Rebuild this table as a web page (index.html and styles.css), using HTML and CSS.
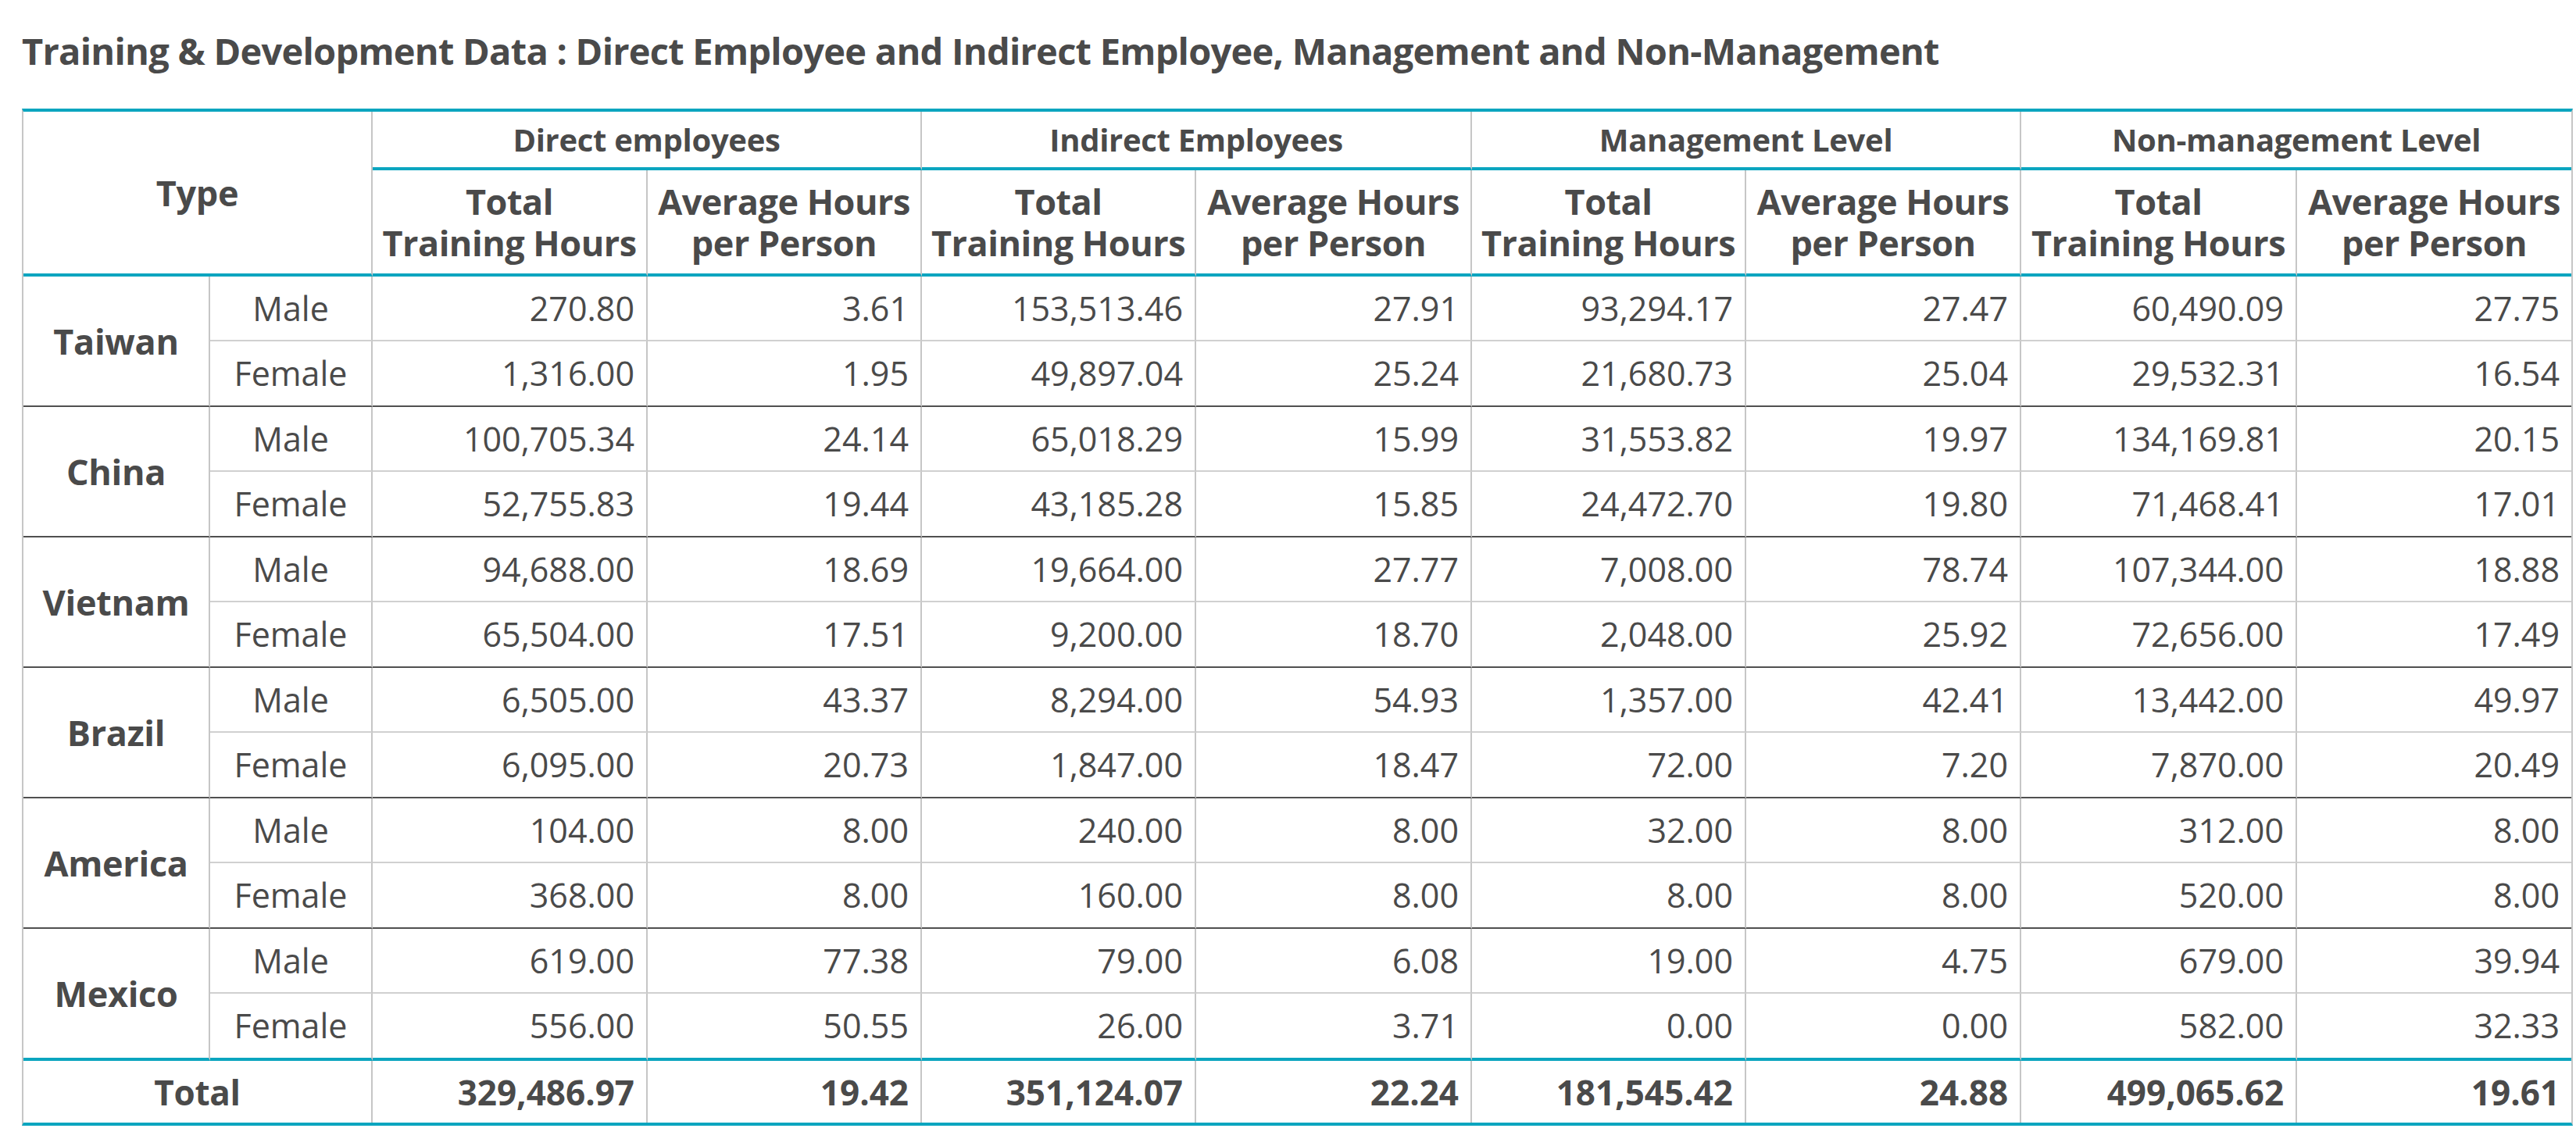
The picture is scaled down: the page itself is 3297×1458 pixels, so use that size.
FILE: index.html
```html
<!DOCTYPE html>
<html lang="en">
<head>
<meta charset="utf-8">
<title>Training &amp; Development Data</title>
<link rel="stylesheet" href="styles.css">
</head>
<body>
<div class="page">
  <h1 class="title">Training &amp; Development Data : Direct Employee and Indirect Employee, Management and Non-Management</h1>
  <table class="data-table">
    <colgroup>
      <col class="c-country">
      <col class="c-gender">
      <col class="c-w352">
      <col class="c-w351">
      <col class="c-w351">
      <col class="c-w353">
      <col class="c-w351">
      <col class="c-w352">
      <col class="c-w353">
      <col class="c-w351">
    </colgroup>
    <thead>
      <tr class="row-group">
        <th class="type" rowspan="2" colspan="2">Type</th>
        <th class="group" colspan="2">Direct employees</th>
        <th class="group" colspan="2">Indirect Employees</th>
        <th class="group" colspan="2">Management Level</th>
        <th class="group last" colspan="2">Non-management Level</th>
      </tr>
      <tr class="row-sub">
        <th class="sub"><span class="ln">Total</span><span class="ln">Training Hours</span></th>
        <th class="sub"><span class="ln">Average Hours</span><span class="ln">per Person</span></th>
        <th class="sub"><span class="ln">Total</span><span class="ln">Training Hours</span></th>
        <th class="sub"><span class="ln">Average Hours</span><span class="ln">per Person</span></th>
        <th class="sub"><span class="ln">Total</span><span class="ln">Training Hours</span></th>
        <th class="sub"><span class="ln">Average Hours</span><span class="ln">per Person</span></th>
        <th class="sub"><span class="ln">Total</span><span class="ln">Training Hours</span></th>
        <th class="sub last"><span class="ln">Average Hours</span><span class="ln">per Person</span></th>
      </tr>
    </thead>
    <tbody>
      <tr class="male">
        <th class="country" rowspan="2">Taiwan</th>
        <td class="gender">Male</td>
        <td class="num">270.80</td><td class="num">3.61</td>
        <td class="num">153,513.46</td><td class="num">27.91</td>
        <td class="num">93,294.17</td><td class="num">27.47</td>
        <td class="num">60,490.09</td><td class="num last">27.75</td>
      </tr>
      <tr class="female">
        <td class="gender">Female</td>
        <td class="num">1,316.00</td><td class="num">1.95</td>
        <td class="num">49,897.04</td><td class="num">25.24</td>
        <td class="num">21,680.73</td><td class="num">25.04</td>
        <td class="num">29,532.31</td><td class="num last">16.54</td>
      </tr>
      <tr class="male">
        <th class="country" rowspan="2">China</th>
        <td class="gender">Male</td>
        <td class="num">100,705.34</td><td class="num">24.14</td>
        <td class="num">65,018.29</td><td class="num">15.99</td>
        <td class="num">31,553.82</td><td class="num">19.97</td>
        <td class="num">134,169.81</td><td class="num last">20.15</td>
      </tr>
      <tr class="female">
        <td class="gender">Female</td>
        <td class="num">52,755.83</td><td class="num">19.44</td>
        <td class="num">43,185.28</td><td class="num">15.85</td>
        <td class="num">24,472.70</td><td class="num">19.80</td>
        <td class="num">71,468.41</td><td class="num last">17.01</td>
      </tr>
      <tr class="male">
        <th class="country" rowspan="2">Vietnam</th>
        <td class="gender">Male</td>
        <td class="num">94,688.00</td><td class="num">18.69</td>
        <td class="num">19,664.00</td><td class="num">27.77</td>
        <td class="num">7,008.00</td><td class="num">78.74</td>
        <td class="num">107,344.00</td><td class="num last">18.88</td>
      </tr>
      <tr class="female">
        <td class="gender">Female</td>
        <td class="num">65,504.00</td><td class="num">17.51</td>
        <td class="num">9,200.00</td><td class="num">18.70</td>
        <td class="num">2,048.00</td><td class="num">25.92</td>
        <td class="num">72,656.00</td><td class="num last">17.49</td>
      </tr>
      <tr class="male">
        <th class="country" rowspan="2">Brazil</th>
        <td class="gender">Male</td>
        <td class="num">6,505.00</td><td class="num">43.37</td>
        <td class="num">8,294.00</td><td class="num">54.93</td>
        <td class="num">1,357.00</td><td class="num">42.41</td>
        <td class="num">13,442.00</td><td class="num last">49.97</td>
      </tr>
      <tr class="female">
        <td class="gender">Female</td>
        <td class="num">6,095.00</td><td class="num">20.73</td>
        <td class="num">1,847.00</td><td class="num">18.47</td>
        <td class="num">72.00</td><td class="num">7.20</td>
        <td class="num">7,870.00</td><td class="num last">20.49</td>
      </tr>
      <tr class="male">
        <th class="country" rowspan="2">America</th>
        <td class="gender">Male</td>
        <td class="num">104.00</td><td class="num">8.00</td>
        <td class="num">240.00</td><td class="num">8.00</td>
        <td class="num">32.00</td><td class="num">8.00</td>
        <td class="num">312.00</td><td class="num last">8.00</td>
      </tr>
      <tr class="female">
        <td class="gender">Female</td>
        <td class="num">368.00</td><td class="num">8.00</td>
        <td class="num">160.00</td><td class="num">8.00</td>
        <td class="num">8.00</td><td class="num">8.00</td>
        <td class="num">520.00</td><td class="num last">8.00</td>
      </tr>
      <tr class="male">
        <th class="country final" rowspan="2">Mexico</th>
        <td class="gender">Male</td>
        <td class="num">619.00</td><td class="num">77.38</td>
        <td class="num">79.00</td><td class="num">6.08</td>
        <td class="num">19.00</td><td class="num">4.75</td>
        <td class="num">679.00</td><td class="num last">39.94</td>
      </tr>
      <tr class="female final">
        <td class="gender">Female</td>
        <td class="num">556.00</td><td class="num">50.55</td>
        <td class="num">26.00</td><td class="num">3.71</td>
        <td class="num">0.00</td><td class="num">0.00</td>
        <td class="num">582.00</td><td class="num last">32.33</td>
      </tr>
    </tbody>
    <tfoot>
      <tr class="total">
        <th class="total-label" colspan="2">Total</th>
        <td class="num">329,486.97</td><td class="num">19.42</td>
        <td class="num">351,124.07</td><td class="num">22.24</td>
        <td class="num">181,545.42</td><td class="num">24.88</td>
        <td class="num">499,065.62</td><td class="num last">19.61</td>
      </tr>
    </tfoot>
  </table>
</div>
</body>
</html>
```

FILE: styles.css
```css
html, body {
  margin: 0;
  padding: 0;
  background: #ffffff;
}

body {
  font-family: "Open Sans", "Noto Sans", "DejaVu Sans", sans-serif;
  color: #4a4a4a;
}

.page {
  padding: 41px 0 0 28px;
}

.title {
  margin: 0 0 50px 0;
  font-size: 47px;
  line-height: 48px;
  font-weight: 700;
  letter-spacing: -0.75px;
  white-space: nowrap;
}

.data-table {
  width: 3265px;
  table-layout: fixed;
  border-collapse: separate;
  border-spacing: 0;
  border-top: 4px solid #0ba5bf;
  border-bottom: 4px solid #0ba5bf;
  border-left: 2px solid #c6c6c6;
  border-right: 2px solid #c6c6c6;
}

.c-country { width: 239px; }
.c-gender { width: 208px; }
.c-w351 { width: 351px; }
.c-w352 { width: 352px; }
.c-w353 { width: 353px; }

.data-table th,
.data-table td {
  box-sizing: border-box;
  padding: 0;
  vertical-align: middle;
  border-right: 2px solid #c6c6c6;
}

.data-table .last {
  border-right: none;
}

/* header */
.data-table thead th {
  font-weight: 700;
  text-align: center;
  border-bottom: 4px solid #0ba5bf;
}

.type {
  font-size: 45px;
  letter-spacing: -0.3px;
}

.row-group th.group {
  height: 75px;
  font-size: 40px;
  line-height: 48px;
  letter-spacing: -0.3px;
}

.row-sub th.sub {
  height: 136px;
  font-size: 45px;
  line-height: 53px;
  letter-spacing: -0.5px;
  white-space: nowrap;
}

.sub .ln {
  display: block;
  height: 53px;
}

/* body */
.data-table tbody td,
.data-table tbody th {
  font-size: 43px;
  line-height: 50px;
}

.male td {
  height: 83px;
  border-bottom: 2px solid #d0d0d0;
}

.female td {
  height: 84px;
  border-bottom: 2px solid #505050;
}

.country {
  font-weight: 700;
  text-align: center;
  border-bottom: 2px solid #505050;
  letter-spacing: -0.3px;
}

.data-table tbody th.country {
  font-size: 45px;
}

.female.final td,
.data-table tbody th.country.final {
  border-bottom: 4px solid #0ba5bf;
}

.female.final td {
  height: 86px;
}

.gender {
  text-align: center;
  font-weight: 400;
}

.num {
  text-align: right;
  padding-right: 15px !important;
  font-weight: 400;
  white-space: nowrap;
}

/* total */
.total td,
.total th {
  height: 79px;
  font-size: 44px;
  line-height: 50px;
  font-weight: 700;
}

.total-label {
  text-align: center;
  letter-spacing: -0.3px;
}
```
